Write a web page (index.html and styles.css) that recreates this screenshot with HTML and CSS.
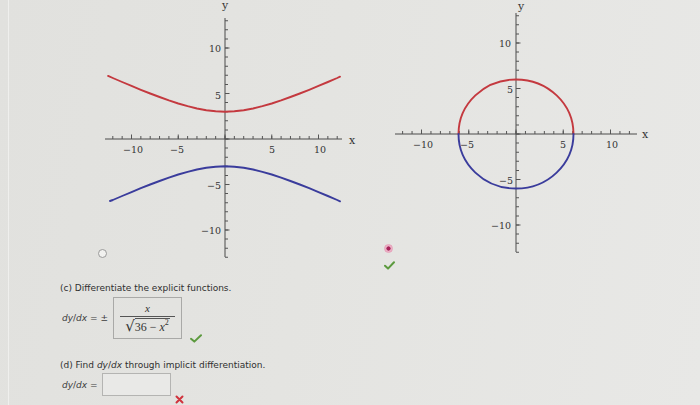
FILE: index.html
```html
<!DOCTYPE html>
<html>
<head>
<meta charset="utf-8">
<link rel="stylesheet" href="styles.css">
</head>
<body>
<div class="page">
  <div class="graphs">
    <div class="option option-left">
      <div class="mark mark-left">
        <span class="radio"></span>
      </div>
      <svg class="plot plot-left" width="259" height="262" viewBox="106 0 259 262">
        <g class="axis">
          <line x1="105" y1="139" x2="342" y2="139"/>
          <line x1="225" y1="18" x2="225" y2="257"/>
        </g>
        <g class="ticks">
          <line x1="112.3" y1="137.5" x2="338" y2="137.5" stroke-width="3" stroke-dasharray="1 8.35"/>
          <line x1="131" y1="136.75" x2="319.5" y2="136.75" stroke-width="4.5" stroke-dasharray="1 45.75"/>
          <line x1="226.5" y1="20.2" x2="226.5" y2="258" stroke-width="3" stroke-dasharray="1 8.1"/>
          <line x1="227.25" y1="47.5" x2="227.25" y2="231" stroke-width="4.5" stroke-dasharray="1 44.5"/>
        </g>
        <g class="labels">
          <text x="133" y="153" text-anchor="middle">−10</text>
          <text x="177" y="153" text-anchor="middle">−5</text>
          <text x="272" y="153" text-anchor="middle">5</text>
          <text x="320" y="153" text-anchor="middle">10</text>
          <text x="221" y="51.5" text-anchor="end">10</text>
          <text x="221" y="98.5" text-anchor="end">5</text>
          <text x="221" y="188.5" text-anchor="end">−5</text>
          <text x="221" y="233.5" text-anchor="end">−10</text>
        </g>
        <text class="axis-name" x="225" y="9" text-anchor="middle">y</text>
        <text class="axis-name" x="352" y="144" text-anchor="middle">x</text>
        <polyline class="curve red" points="108.1,75.9 112.8,78 122.15,82 131.5,85.9 140.85,89.8 150.2,93.5 159.55,97 168.9,100.4 178.25,103.5 187.6,106.2 196.95,108.5 206.3,110.2 215.65,111.3 225,111.7 234.35,111.3 243.7,110.2 253.05,108.5 262.4,106.2 271.75,103.5 281.1,100.4 290.45,97 299.8,93.5 309.15,89.8 318.5,85.9 327.85,82 337.2,78 340,76.7"/>
        <polyline class="curve blue" points="110,201 112.8,200 122.15,196 131.5,192.1 140.85,188.2 150.2,184.5 159.55,181 168.9,177.6 178.25,174.5 187.6,171.8 196.95,169.5 206.3,167.8 215.65,166.7 225,166.3 234.35,166.7 243.7,167.8 253.05,169.5 262.4,171.8 271.75,174.5 281.1,177.6 290.45,181 299.8,184.5 309.15,188.2 318.5,192.1 327.85,196 337.2,200 340,201.3"/>
      </svg>
    </div>
    <div class="option option-right">
      <div class="mark mark-right">
        <span class="radio radio-on"></span>
        <svg class="check check-small" width="11" height="9" viewBox="0 0 11 9"><path d="M1 4.8 L4 7.6 L10 1.2"/></svg>
      </div>
      <svg class="plot plot-right" width="268" height="262" viewBox="392 0 268 262">
        <g class="axis">
          <line x1="395" y1="134" x2="637" y2="134"/>
          <line x1="516" y1="13" x2="516" y2="252"/>
        </g>
        <g class="ticks">
          <line x1="402.1" y1="132.5" x2="630" y2="132.5" stroke-width="3" stroke-dasharray="1 8.45"/>
          <line x1="421" y1="131.75" x2="611.5" y2="131.75" stroke-width="4.5" stroke-dasharray="1 46.25"/>
          <line x1="517.5" y1="15.2" x2="517.5" y2="253" stroke-width="3" stroke-dasharray="1 8.1"/>
          <line x1="518.25" y1="42.5" x2="518.25" y2="226" stroke-width="4.5" stroke-dasharray="1 44.5"/>
        </g>
        <g class="labels">
          <text x="423" y="148" text-anchor="middle">−10</text>
          <text x="467" y="148" text-anchor="middle">−5</text>
          <text x="563" y="148" text-anchor="middle">5</text>
          <text x="612" y="148" text-anchor="middle">10</text>
          <text x="511" y="46.5" text-anchor="end">10</text>
          <text x="513" y="92.5" text-anchor="end">5</text>
          <text x="513" y="183.5" text-anchor="end">−5</text>
          <text x="511" y="228.5" text-anchor="end">−10</text>
        </g>
        <text class="axis-name" x="521" y="10" text-anchor="middle">y</text>
        <text class="axis-name" x="645" y="138" text-anchor="middle">x</text>
        <path class="curve red" d="M458.5 134 A57.5 54.6 0 0 1 573.5 134"/>
        <path class="curve blue" d="M458.5 134 A57.5 54.6 0 0 0 573.5 134"/>
      </svg>
    </div>
  </div>

  <div class="part part-c">
    <p class="prompt">(c) Differentiate the explicit functions.</p>
    <div class="answer-row row-c">
      <span class="lhs"><i>dy</i>/<i>dx</i> = ±</span>
      <span class="math-box">
        <span class="frac">
          <span class="num">x</span>
          <span class="den"><span class="radical">√</span><span class="radicand">36 − <i>x</i><sup>2</sup></span></span>
        </span>
      </span>
      <svg class="check check-c" width="12" height="9" viewBox="0 0 12 9"><path d="M1 4.8 L4.3 7.6 L11 1.2"/></svg>
    </div>
  </div>

  <div class="part part-d">
    <p class="prompt">(d) Find <i>dy</i>/<i>dx</i> through implicit differentiation.</p>
    <div class="answer-row row-d">
      <span class="lhs"><i>dy</i>/<i>dx</i> =</span>
      <span class="empty-box"></span>
      <svg class="cross" width="9" height="9" viewBox="0 0 9 9"><path d="M1.5 1.5 L7.5 7.5 M7.5 1.5 L1.5 7.5"/></svg>
    </div>
  </div>
</div>
</body>
</html>
```

FILE: styles.css
```css
html, body {
  margin: 0;
  padding: 0;
}

body {
  width: 700px;
  height: 405px;
  overflow: hidden;
  background: linear-gradient(100deg, #e1e1de 0%, #e4e4e1 45%, #e8e8e6 100%);
  font-family: "DejaVu Sans", Verdana, sans-serif;
  color: #333;
}

.page {
  margin-left: 8px;
  border-left: 1px solid #efefed;
  height: 405px;
  padding-left: 1px;
  box-sizing: border-box;
}

.graphs {
  display: flex;
  height: 262px;
  margin-left: 88px;
}

.option {
  display: flex;
}

.option-right {
  margin-left: 19px;
}

.mark {
  width: 8px;
  display: flex;
  flex-direction: column;
  align-items: center;
}

.mark > * {
  flex-shrink: 0;
}

.mark-left {
  padding-top: 249px;
}

.mark-right {
  padding-top: 244px;
}

.radio {
  display: block;
  width: 7px;
  height: 7px;
  border-radius: 50%;
  border: 1px solid #9a9a9a;
  background: #f1f1ef;
  box-sizing: content-box;
}

.radio-on {
  border-color: #e7a3bb;
  background: radial-gradient(circle, #a8235a 0 1.8px, #ebb2c6 2.4px);
}

.check-small {
  display: block;
  margin-top: 8px;
  margin-left: 3px;
}

.plot {
  display: block;
  overflow: visible;
}

.axis line {
  stroke: #4a4a4a;
  stroke-width: 1;
}

.ticks line {
  stroke: #555;
}

.labels text {
  font-family: "DejaVu Serif", "Liberation Serif", serif;
  font-size: 9.5px;
  fill: #333;
}

.axis-name {
  font-family: "DejaVu Serif", "Liberation Serif", serif;
  font-size: 11px;
  fill: #333;
}

.curve {
  fill: none;
  stroke-width: 1.9;
  stroke-linejoin: round;
  stroke-linecap: round;
}

.curve.red {
  stroke: #c4393f;
}

.curve.blue {
  stroke: #3a3c9c;
}

.part {
  margin-left: 50px;
}

.prompt {
  margin: 0;
  font-size: 9px;
  line-height: 10px;
  color: #2f2f2f;
}

.part-c {
  margin-top: 21px;
}

.part-d {
  margin-top: 21px;
}

.answer-row {
  display: flex;
  align-items: center;
}

.row-c {
  margin-top: 4px;
  margin-left: 2px;
}

.row-d {
  margin-top: 3px;
  margin-left: 2px;
}

.lhs {
  font-size: 9px;
  line-height: 10px;
  color: #3c3c3c;
  white-space: pre;
}

.lhs i {
  font-style: italic;
}

.row-c .lhs {
  width: 51px;
}

.row-d .lhs {
  width: 40px;
}

.math-box {
  width: 69px;
  height: 42px;
  box-sizing: border-box;
  border: 1px solid #a9a9a7;
  display: flex;
  align-items: center;
  justify-content: center;
}

.frac {
  display: flex;
  flex-direction: column;
  align-items: center;
  font-family: "Liberation Serif", "DejaVu Serif", serif;
  color: #333;
}

.num {
  font-style: italic;
  font-size: 11px;
  line-height: 11px;
  width: 55px;
  text-align: center;
  border-bottom: 1px solid #555;
  padding-bottom: 2px;
}

.den {
  display: flex;
  align-items: flex-end;
  margin-top: 1px;
  font-size: 12px;
  line-height: 14px;
}

.radical {
  font-family: "DejaVu Sans", sans-serif;
  font-size: 15px;
  line-height: 16px;
}

.radicand {
  border-top: 1px solid #555;
  padding-top: 1px;
  padding-right: 1px;
}

.radicand sup {
  font-size: 8px;
  line-height: 0;
  vertical-align: 6px;
}

.check {
  fill: none;
  stroke: #5c9a3e;
  stroke-width: 2;
  stroke-linecap: round;
  stroke-linejoin: round;
}

.check-c {
  align-self: flex-end;
  margin-left: 8px;
  margin-bottom: -4px;
}

.empty-box {
  width: 69px;
  height: 23px;
  box-sizing: border-box;
  border: 1px solid #b4b4b2;
  background: #e9e9e7;
}

.cross {
  align-self: flex-end;
  margin-left: 4px;
  margin-bottom: -8px;
  fill: none;
  stroke: #d0333d;
  stroke-width: 2;
  stroke-linecap: round;
}
```
